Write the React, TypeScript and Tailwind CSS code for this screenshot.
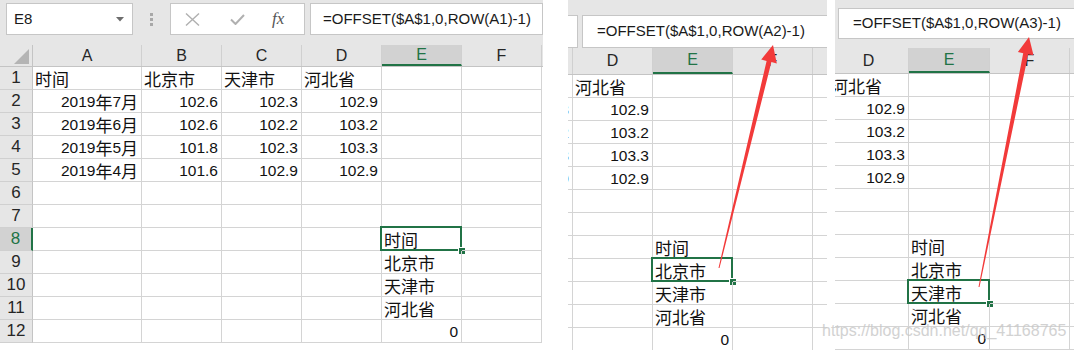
import React from 'react';

const CJK = /([\u4e00-\u9fff]+)/;
const isCJK = (p: string) => /[\u4e00-\u9fff]/.test(p);

function Txt({ s }: { s: string }) {
  return (
    <>
      {s
        .split(CJK)
        .filter(Boolean)
        .map((p, i) =>
          isCJK(p) ? (
            <span key={i} className="font-['Noto_Sans_CJK_SC',sans-serif] text-[17px]">
              {p}
            </span>
          ) : (
            <span key={i}>{p}</span>
          )
        )}
    </>
  );
}

const SHEET: Record<string, string> = {
  A1: '时间', B1: '北京市', C1: '天津市', D1: '河北省',
  A2: '2019年7月', B2: '102.6', C2: '102.3', D2: '102.9',
  A3: '2019年6月', B3: '102.6', C3: '102.2', D3: '103.2',
  A4: '2019年5月', B4: '101.8', C4: '102.3', D4: '103.3',
  A5: '2019年4月', B5: '101.6', C5: '102.9', D5: '102.9',
  E8: '时间', E9: '北京市', E10: '天津市', E11: '河北省', E12: '0',
};

type Col = { l: string; w: string };

const ROWS = [1, 2, 3, 4, 5, 6, 7, 8, 9, 10, 11, 12];

function Cell({ col, row, selected }: { col: Col; row: number; selected: boolean }) {
  const v = SHEET[col.l + row];
  const right = v !== undefined && /^[0-9]/.test(v);
  return (
    <div
      className={`${col.w} h-[23px] shrink-0 relative border-r border-b border-[#d4d4d4] flex items-end whitespace-nowrap leading-[16px] pb-[2px] text-[15.5px] text-[#111] ${
        right ? 'justify-end pr-[3px]' : 'pl-[2px]'
      }`}
    >
      {v !== undefined && <Txt s={v} />}
      {selected && (
        <>
          <div className="absolute -left-[2px] -top-[2px] -right-[1px] -bottom-[1px] border-2 border-[#217346]" />
          <div className="absolute -right-[5px] -bottom-[5px] w-[8px] h-[8px] bg-[#217346] border border-white" />
        </>
      )}
    </div>
  );
}

function Grid({
  cols,
  rowHeader,
  headerH,
  selCol,
  selRow,
}: {
  cols: Col[];
  rowHeader: boolean;
  headerH: string;
  selCol: string;
  selRow: number;
}) {
  return (
    <div className="flex flex-col">
      <div className={`flex ${headerH} bg-[#e6e6e6] border-b border-[#c4c4c4]`}>
        {rowHeader && (
          <div className="w-[33px] h-full shrink-0 border-r border-[#c4c4c4] flex items-end justify-end pr-[3px] pb-[2px]">
            <svg width="15" height="15" viewBox="0 0 15 15">
              <path d="M15 0 L15 15 L0 15 Z" fill="#b4b4b4" />
            </svg>
          </div>
        )}
        {cols.map((c) => (
          <div
            key={c.l}
            className={`${c.w} h-full shrink-0 border-r border-[#d0d0d0] flex items-center justify-center text-[16px] ${
              c.l === selCol
                ? 'bg-[#d2d2d2] text-[#217346] border-b-2 border-b-[#217346]'
                : 'text-[#262626]'
            }`}
          >
            {c.l}
          </div>
        ))}
      </div>
      {ROWS.map((r) => (
        <div key={r} className="flex">
          {rowHeader && (
            <div
              className={`w-[33px] h-[23px] shrink-0 flex items-center justify-center text-[17px] border-b border-[#d0d0d0] ${
                r === selRow
                  ? 'bg-[#d2d2d2] text-[#217346] border-r-2 border-r-[#217346]'
                  : 'bg-[#e6e6e6] text-[#262626] border-r border-r-[#c4c4c4]'
              }`}
            >
              {r}
            </div>
          )}
          {cols.map((c) => (
            <Cell key={c.l} col={c} row={r} selected={c.l === selCol && r === selRow} />
          ))}
        </div>
      ))}
    </div>
  );
}

function FormulaBox({ f, className }: { f: string; className: string }) {
  return (
    <div className={`flex-1 bg-white border border-[#c6c6c6] flex items-center whitespace-nowrap overflow-hidden text-[15px] text-[#1a1a1a] ${className}`}>
      {f}
    </div>
  );
}

function Toolbar1() {
  return (
    <div className="h-[47px] bg-[#e6e6e6] flex items-start pt-[3px] pl-[6px]">
      <div className="w-[127px] h-[32px] shrink-0 bg-white border border-[#c6c6c6] flex items-center justify-between pl-[7px] pr-[8px] text-[15px] text-[#1a1a1a]">
        <span>E8</span>
        <svg width="8" height="5" viewBox="0 0 8 5">
          <path d="M0 0 H8 L4 4.5 Z" fill="#6d6d6d" />
        </svg>
      </div>
      <div className="w-[37px] h-[32px] shrink-0 flex flex-col items-center justify-center gap-[2px]">
        <div className="w-[3px] h-[3px] bg-[#a8a8a8]" />
        <div className="w-[3px] h-[3px] bg-[#a8a8a8]" />
        <div className="w-[3px] h-[3px] bg-[#a8a8a8]" />
      </div>
      <div className="w-[135px] h-[32px] shrink-0 bg-white border border-[#c6c6c6] flex items-center pl-[14px]">
        <svg width="15" height="13" viewBox="0 0 15 13">
          <path d="M1 0.5 L14 12.5 M14 0.5 L1 12.5" stroke="#b0b0b0" strokeWidth="1.4" fill="none" />
        </svg>
        <svg className="ml-[30px]" width="15" height="11" viewBox="0 0 15 11">
          <path d="M1 5.5 L5.5 10 L14 1" stroke="#b0b0b0" strokeWidth="2" fill="none" />
        </svg>
        <span className="ml-[27px] font-['Liberation_Serif',serif] italic text-[17px] text-[#555]">fx</span>
      </div>
      <FormulaBox f="=OFFSET($A$1,0,ROW(A1)-1)" className="ml-[5px] h-[32px] pl-[12px]" />
    </div>
  );
}

function Toolbar2() {
  return (
    <div className="h-[55px] bg-[#e6e6e6] flex items-start pt-[15px]">
      <div className="w-[10px] h-[33px] shrink-0 bg-white border border-l-0 border-[#c6c6c6]" />
      <FormulaBox f="=OFFSET($A$1,0,ROW(A2)-1)" className="ml-[4px] h-[33px] pl-[14px] border-r-0" />
    </div>
  );
}

function Toolbar3() {
  return (
    <div className="h-[48px] bg-[#e6e6e6] flex items-start pt-[8px] pl-[3px]">
      <FormulaBox f="=OFFSET($A$1,0,ROW(A3)-1)" className="h-[31px] pl-[14px] border-r-0" />
    </div>
  );
}

const COLS1: Col[] = [
  { l: 'A', w: 'w-[109px]' },
  { l: 'B', w: 'w-[80px]' },
  { l: 'C', w: 'w-[80px]' },
  { l: 'D', w: 'w-[80px]' },
  { l: 'E', w: 'w-[80px]' },
  { l: 'F', w: 'w-[80px]' },
];
const COLS2: Col[] = [
  { l: 'C', w: 'w-[80px]' },
  { l: 'D', w: 'w-[80px]' },
  { l: 'E', w: 'w-[80px]' },
  { l: 'F', w: 'w-[80px]' },
  { l: 'G', w: 'w-[80px]' },
];
const COLS3: Col[] = [
  { l: 'D', w: 'w-[80px]' },
  { l: 'E', w: 'w-[81px]' },
  { l: 'F', w: 'w-[80px]' },
  { l: 'G', w: 'w-[80px]' },
];

export default function App() {
  return (
    <div className="relative w-[1074px] h-[350px] overflow-hidden bg-white font-['Liberation_Sans','Noto_Sans_CJK_SC',sans-serif] text-[15px] text-[#1a1a1a]">
      <div className="flex items-start">
        <div className="w-[543px] h-[343px] shrink-0 overflow-hidden flex flex-col">
          <Toolbar1 />
          <Grid cols={COLS1} rowHeader headerH="h-[22px]" selCol="E" selRow={8} />
        </div>
        <div className="w-[25px] shrink-0" />
        <div className="w-[259px] h-[350px] shrink-0 overflow-hidden flex flex-col">
          <Toolbar2 />
          <div className="-ml-[75px]">
            <Grid cols={COLS2} rowHeader={false} headerH="h-[27px]" selCol="E" selRow={9} />
          </div>
        </div>
        <div className="w-[8px] shrink-0" />
        <div className="w-[239px] h-[350px] shrink-0 overflow-hidden flex flex-col">
          <Toolbar3 />
          <div className="-ml-[6px]">
            <Grid cols={COLS3} rowHeader={false} headerH="h-[26px]" selCol="E" selRow={10} />
          </div>
        </div>
      </div>

      <svg className="absolute left-0 top-0 pointer-events-none" width="1074" height="350" viewBox="0 0 1074 350">
        <polygon
          points="718.5,267.9 719.5,268.1 771.4,62.1 776.8,63.4 773,45 761.2,59.6 766.6,60.9"
          fill="#f23a3a"
        />
        <polygon
          points="978.5,286.9 979.5,287.1 1028.2,54.2 1033.5,55.3 1029,37 1017.9,52.1 1023.2,53.2"
          fill="#f23a3a"
        />
      </svg>

      <div className="absolute left-[822px] top-[322px] text-[16px] leading-[18px] text-[#c8c8c8] opacity-80 whitespace-nowrap">
        https://blog.csdn.net/qq_41168765
      </div>
    </div>
  );
}
